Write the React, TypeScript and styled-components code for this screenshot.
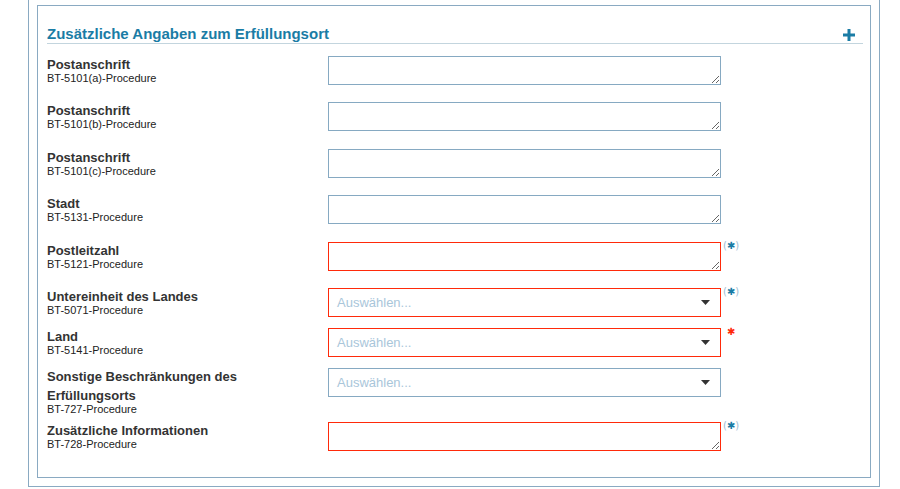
import React from "react";
import styled, { createGlobalStyle } from "styled-components";

const GlobalStyle = createGlobalStyle`
  html, body {
    margin: 0;
    padding: 0;
    background: #fff;
    overflow: hidden;
  }
  body {
    font-family: "Liberation Sans", Arial, sans-serif;
    color: #333;
  }
`;

const Outer = styled.div`
  margin: -4px 20px 0 28px;
  border: 1px solid #8aaac2;
  padding: 8px;
`;

const Panel = styled.section`
  border: 1px solid #8aaac2;
  padding: 19px 7px 26px 9px;
`;

const Header = styled.div`
  display: flex;
  align-items: center;
  justify-content: space-between;
  height: 18px;
  border-bottom: 1px solid #c3d5de;
  margin-bottom: 10.5px;
`;

const Title = styled.h2`
  margin: 0;
  font-size: 15px;
  line-height: 18px;
  font-weight: bold;
  color: #1a7ca5;
`;

const PlusButton = styled.button`
  display: flex;
  align-items: center;
  justify-content: center;
  border: 0;
  background: none;
  padding: 0;
  margin: 1px 8px 0 0;
  width: 12px;
  height: 12px;
  cursor: pointer;
`;

const Row = styled.div<{ $after: number }>`
  display: grid;
  grid-template-columns: 281px 393px 1fr;
  align-items: start;
  margin-bottom: ${(p) => p.$after}px;
`;

const LabelBlock = styled.div`
  padding-right: 6px;
`;

const LabelText = styled.div`
  font-size: 13px;
  line-height: 19px;
  font-weight: bold;
  color: #333;
`;

const Code = styled.div`
  font-size: 11px;
  line-height: 13px;
  margin-top: -2px;
  color: #222;
`;

const TextArea = styled.textarea<{ $invalid?: boolean }>`
  display: block;
  box-sizing: border-box;
  width: 393px;
  height: 29px;
  margin: 1.5px 0 0;
  padding: 4px 8px;
  border: 1px solid ${(p) => (p.$invalid ? "#ff2a0a" : "#86a9c2")};
  border-radius: 0;
  font-family: "Liberation Sans", Arial, sans-serif;
  font-size: 13px;
  resize: vertical;
  outline: none;
`;

const SelectBox = styled.div<{ $invalid?: boolean }>`
  display: flex;
  align-items: center;
  justify-content: space-between;
  box-sizing: border-box;
  width: 393px;
  height: 29px;
  margin-top: 1.5px;
  padding: 0 10px 0 8px;
  border: 1px solid ${(p) => (p.$invalid ? "#ff2a0a" : "#86a9c2")};
  background: #fff;
  cursor: pointer;
`;

const Placeholder = styled.span`
  font-size: 13px;
  color: #a9c6da;
`;

const Marker = styled.span`
  padding-left: 2px;
  font-family: "DejaVu Sans", sans-serif;
  font-size: 10px;
  line-height: 10px;
  white-space: nowrap;
`;

const Paren = styled.span`
  color: #9dbcd0;
`;

const Star = styled.span<{ $required?: boolean }>`
  color: ${(p) => (p.$required ? "#ff2a0a" : "#1a7ca5")};
  font-weight: bold;
`;

const RequiredMark = styled.span`
  padding-left: 6px;
  font-family: "DejaVu Sans", sans-serif;
  font-size: 10px;
  line-height: 10px;
`;

type Field = {
  label: string;
  code: string;
  kind: "text" | "select";
  invalid?: boolean;
  mark?: "cond" | "req";
  after: number;
};

const fields: Field[] = [
  { label: "Postanschrift", code: "BT-5101(a)-Procedure", kind: "text", after: 15.5 },
  { label: "Postanschrift", code: "BT-5101(b)-Procedure", kind: "text", after: 16.5 },
  { label: "Postanschrift", code: "BT-5101(c)-Procedure", kind: "text", after: 15.5 },
  { label: "Stadt", code: "BT-5131-Procedure", kind: "text", after: 16.5 },
  { label: "Postleitzahl", code: "BT-5121-Procedure", kind: "text", invalid: true, mark: "cond", after: 15.5 },
  { label: "Untereinheit des Landes", code: "BT-5071-Procedure", kind: "select", invalid: true, mark: "cond", after: 9.5 },
  { label: "Land", code: "BT-5141-Procedure", kind: "select", invalid: true, mark: "req", after: 9.5 },
  { label: "Sonstige Beschränkungen des Erfüllungsorts", code: "BT-727-Procedure", kind: "select", after: 5 },
  { label: "Zusätzliche Informationen", code: "BT-728-Procedure", kind: "text", invalid: true, mark: "cond", after: 0 },
];

function Caret() {
  return (
    <svg width="9" height="5" viewBox="0 0 9 5" aria-hidden="true">
      <path d="M0 0h9L4.5 5z" fill="#333" />
    </svg>
  );
}

function Plus() {
  return (
    <svg width="12" height="12" viewBox="0 0 12 12" aria-hidden="true">
      <path d="M4.5 0h3v4.5H12v3H7.5V12h-3V7.5H0v-3h4.5z" fill="#1a7ca5" />
    </svg>
  );
}

export default function App() {
  return (
    <>
      <GlobalStyle />
      <Outer>
        <Panel>
          <Header>
            <Title>Zusätzliche Angaben zum Erfüllungsort</Title>
            <PlusButton aria-label="Hinzufügen">
              <Plus />
            </PlusButton>
          </Header>
          {fields.map((f, i) => (
            <Row key={i} $after={f.after}>
              <LabelBlock>
                <LabelText>{f.label}</LabelText>
                <Code>{f.code}</Code>
              </LabelBlock>
              {f.kind === "text" ? (
                <TextArea $invalid={f.invalid} />
              ) : (
                <SelectBox $invalid={f.invalid}>
                  <Placeholder>Auswählen...</Placeholder>
                  <Caret />
                </SelectBox>
              )}
              {f.mark === "cond" && (
                <Marker>
                  <Paren>(</Paren>
                  <Star>✱</Star>
                  <Paren>)</Paren>
                </Marker>
              )}
              {f.mark === "req" && (
                <RequiredMark>
                  <Star $required>✱</Star>
                </RequiredMark>
              )}
            </Row>
          ))}
        </Panel>
      </Outer>
    </>
  );
}
